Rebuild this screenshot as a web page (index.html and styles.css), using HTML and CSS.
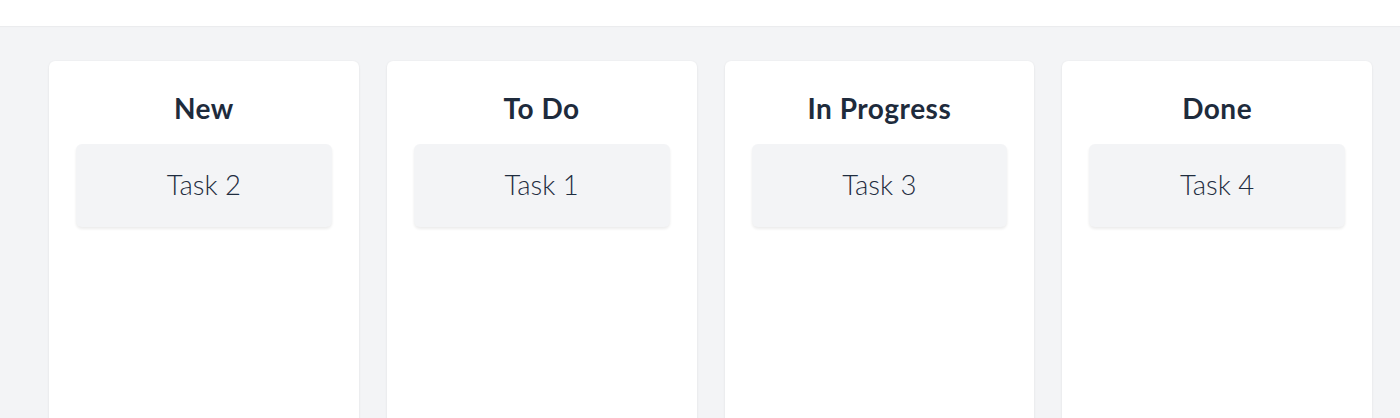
FILE: index.html
```html
<!DOCTYPE html>
<html>
<head>
<meta charset="utf-8">
<link rel="stylesheet" href="styles.css">
</head>
<body>
<header class="topbar"></header>
<main class="board">
  <section class="column">
    <h2 class="column-title">New</h2>
    <div class="task">Task 2</div>
  </section>
  <section class="column">
    <h2 class="column-title">To Do</h2>
    <div class="task">Task 1</div>
  </section>
  <section class="column">
    <h2 class="column-title">In Progress</h2>
    <div class="task">Task 3</div>
  </section>
  <section class="column">
    <h2 class="column-title">Done</h2>
    <div class="task">Task 4</div>
  </section>
</main>
</body>
</html>
```
FILE: styles.css
```css
html, body {
  margin: 0;
  padding: 0;
  height: 100%;
  overflow: hidden;
}
body {
  background: #f3f4f6;
  font-family: Lato, "Open Sans", sans-serif;
  color: #1f2d3f;
}
.topbar {
  height: 26px;
  background: #ffffff;
  box-shadow: 0 1px 1px rgba(0,0,0,0.03);
}
.board {
  display: grid;
  grid-template-columns: repeat(4, 1fr);
  gap: 28px;
  padding: 35px 28px 0 49px;
}
.column {
  background: #ffffff;
  border-radius: 6px;
  box-shadow: 0 1px 3px rgba(0,0,0,0.06), 0 0 2px rgba(0,0,0,0.04);
  min-height: 420px;
  padding: 28px 27px 0 27px;
  display: flex;
  flex-direction: column;
  gap: 17px;
}
.column-title {
  margin: 0;
  text-align: center;
  font-size: 28px;
  font-weight: 700;
  letter-spacing: 0.5px;
  line-height: 38px;
  color: #1e2b3c;
}
.task {
  height: 83px;
  box-sizing: border-box;
  padding-bottom: 3px;
  background: #f3f4f6;
  border-radius: 6px;
  box-shadow: 0 2px 3px rgba(0,0,0,0.08);
  display: flex;
  align-items: center;
  justify-content: center;
  font-size: 27.5px;
  font-weight: 300;
  color: #1f2d3f;
}
```
